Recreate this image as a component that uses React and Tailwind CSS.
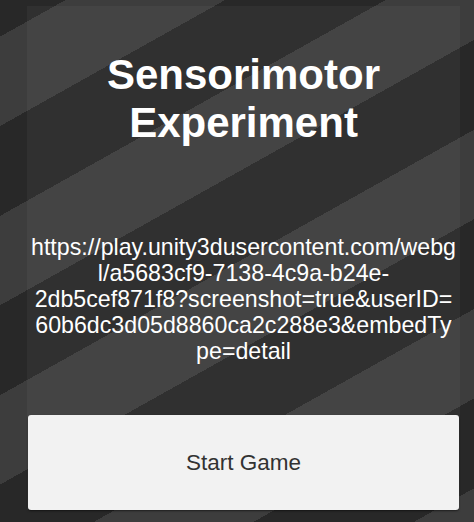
export default function App() {
  const lines = [
    "https://play.unity3dusercontent.com/webg",
    "l/a5683cf9-7138-4c9a-b24e-",
    "2db5cef871f8?screenshot=true&userID=",
    "60b6dc3d05d8860ca2c288e3&embedTy",
    "pe=detail",
  ];
  return (
    <div className="w-[474px] h-[522px] overflow-hidden bg-[#282828] bg-[image:repeating-linear-gradient(150.75deg,#282828_0px,#282828_32px,#3d3d3d_32px,#3d3d3d_110px,#282828_110px,#282828_156.4px)] pl-[27px] pr-[14px] pt-[6px] pb-[12px] flex font-['Liberation_Sans',Arial,sans-serif]">
      <div className="flex-1 flex flex-col bg-white/[0.04]">
        <div className="mt-[45px] text-center text-white font-bold text-[42px] leading-[48px]">
          <div className="whitespace-nowrap">Sensorimotor</div>
          <div className="whitespace-nowrap">Experiment</div>
        </div>
        <div className="mt-[87px] text-center text-white text-[23.2px] leading-[26px]">
          {lines.map((l) => (
            <div key={l} className="whitespace-nowrap">{l}</div>
          ))}
        </div>
        <div className="flex-1" />
        <button className="mx-[1px] h-[95px] rounded-[3px] bg-[#f2f2f2] shadow-[0_1px_2px_rgba(0,0,0,0.5)] flex items-center justify-center text-[#323232] text-[22.5px]">
          Start Game
        </button>
      </div>
    </div>
  );
}
